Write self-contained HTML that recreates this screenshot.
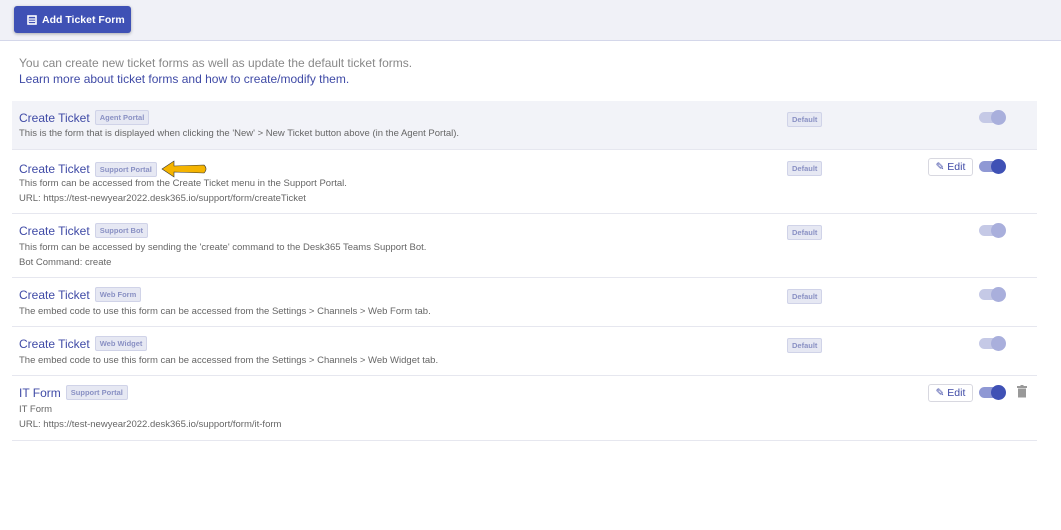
<!DOCTYPE html><html><head><style>
*{box-sizing:border-box;margin:0;padding:0}
body{width:1061px;height:530px;background:#fff;font-family:"Liberation Sans",sans-serif;position:relative;overflow:hidden}
.hdr{position:absolute;left:0;top:0;width:1061px;height:41px;background:#f0f1f7;border-bottom:1px solid #d4d7ea}
.btn{position:absolute;left:14px;top:6px;width:117px;height:27px;background:#3f51b5;border-radius:3px;color:#fff;font-size:10.5px;font-weight:bold;display:flex;align-items:center;padding-left:13px;box-shadow:0 1px 3px rgba(0,0,0,.3)}
.intro{position:absolute;left:19px;top:56px;font-size:12px;line-height:15.5px;color:#888}
.intro a{color:#3f4aa6}
.row{position:absolute;left:12px;width:1025px;border-bottom:1px solid #e6e7ef}
.t{position:absolute;left:7px;top:9px;font-size:12px;color:#3f4aa6;display:flex;align-items:center}
.b{display:inline-block;margin-left:5px;font-size:7.5px;font-weight:bold;color:#8a91c4;background:#e6e8f3;border:1px solid #d0d3e8;border-radius:2px;padding:2px 4px}
.d{position:absolute;left:7px;font-size:9.5px;color:#666}
.def{position:absolute;left:775px;top:8px}
.def .b{margin:0}
.tg{position:absolute;left:967px;top:9px;width:28px;height:15px}
.tg:before{content:"";position:absolute;left:0;top:2px;width:26px;height:11px;border-radius:6px;background:#c5c9e6}
.tg:after{content:"";position:absolute;left:12px;top:0;width:15px;height:15px;border-radius:8px;background:#a9afdc}
.tg.on:before{background:#8f98d4}.tg.on:after{background:#3f51b5}
.ed{position:absolute;left:916px;top:8px;width:45px;height:18px;border:1px solid #d8d8e0;border-radius:3px;font-size:10.5px;color:#3f4aa6;display:flex;align-items:center;justify-content:center}
</style></head><body>
<div class="hdr"><div class="btn"><svg width="10" height="10" viewBox="0 0 10 10" style="margin-right:5px"><rect x="1" y="1" width="8" height="8" fill="none" stroke="#fff" stroke-width="1.6"/><line x1="2" y1="4" x2="8" y2="4" stroke="#fff" stroke-width="1.2"/><line x1="2" y1="6.3" x2="8" y2="6.3" stroke="#fff" stroke-width="1.2"/></svg>Add Ticket Form</div></div>
<div class="intro">You can create new ticket forms as well as update the default ticket forms.<br><a>Learn more about ticket forms and how to create/modify them.</a></div>

<div class="row" style="top:101px;height:49px;background:#f2f3f8"><div class="t">Create Ticket<span class="b">Agent Portal</span></div><div class="d" style="top:27px">This is the form that is displayed when clicking the 'New' &gt; New Ticket button above (in the Agent Portal).</div><div class="def"><span class="b">Default</span></div><div class="tg"></div></div>

<div class="row" style="top:150px;height:64px"><div class="t">Create Ticket<span class="b">Support Portal</span><svg width="50" height="20" viewBox="0 0 50 20" style="margin-left:3px"><path d="M2 10 L14 2 L14 7 L44 6 Q48 10 44 14 L14 13 L14 18 Z" fill="#f5b400" stroke="#333" stroke-width=".6"/></svg></div><div class="d" style="top:28px">This form can be accessed from the Create Ticket menu in the Support Portal.</div><div class="d" style="top:43px">URL: https://test-newyear2022.desk365.io/support/form/createTicket</div><div class="def"><span class="b">Default</span></div><div class="ed">✎ Edit</div><div class="tg on"></div></div>

<div class="row" style="top:214px;height:64px"><div class="t">Create Ticket<span class="b">Support Bot</span></div><div class="d" style="top:28px">This form can be accessed by sending the 'create' command to the Desk365 Teams Support Bot.</div><div class="d" style="top:43px">Bot Command: create</div><div class="def"><span class="b">Default</span></div><div class="tg"></div></div>

<div class="row" style="top:278px;height:49px"><div class="t">Create Ticket<span class="b">Web Form</span></div><div class="d" style="top:28px">The embed code to use this form can be accessed from the Settings &gt; Channels &gt; Web Form tab.</div><div class="def"><span class="b">Default</span></div><div class="tg"></div></div>

<div class="row" style="top:327px;height:49px"><div class="t">Create Ticket<span class="b">Web Widget</span></div><div class="d" style="top:28px">The embed code to use this form can be accessed from the Settings &gt; Channels &gt; Web Widget tab.</div><div class="def"><span class="b">Default</span></div><div class="tg"></div></div>

<div class="row" style="top:376px;height:65px"><div class="t">IT Form<span class="b">Support Portal</span></div><div class="d" style="top:28px">IT Form</div><div class="d" style="top:43px">URL: https://test-newyear2022.desk365.io/support/form/it-form</div><div class="ed">✎ Edit</div><div class="tg on"></div><svg style="position:absolute;left:1005px;top:9px" width="10" height="13" viewBox="0 0 10 13"><rect x="0" y="1" width="10" height="2" fill="#999"/><rect x="3.5" y="0" width="3" height="1.5" fill="#999"/><rect x="1" y="3.5" width="8" height="9" fill="#999"/></svg></div>
</body></html>
